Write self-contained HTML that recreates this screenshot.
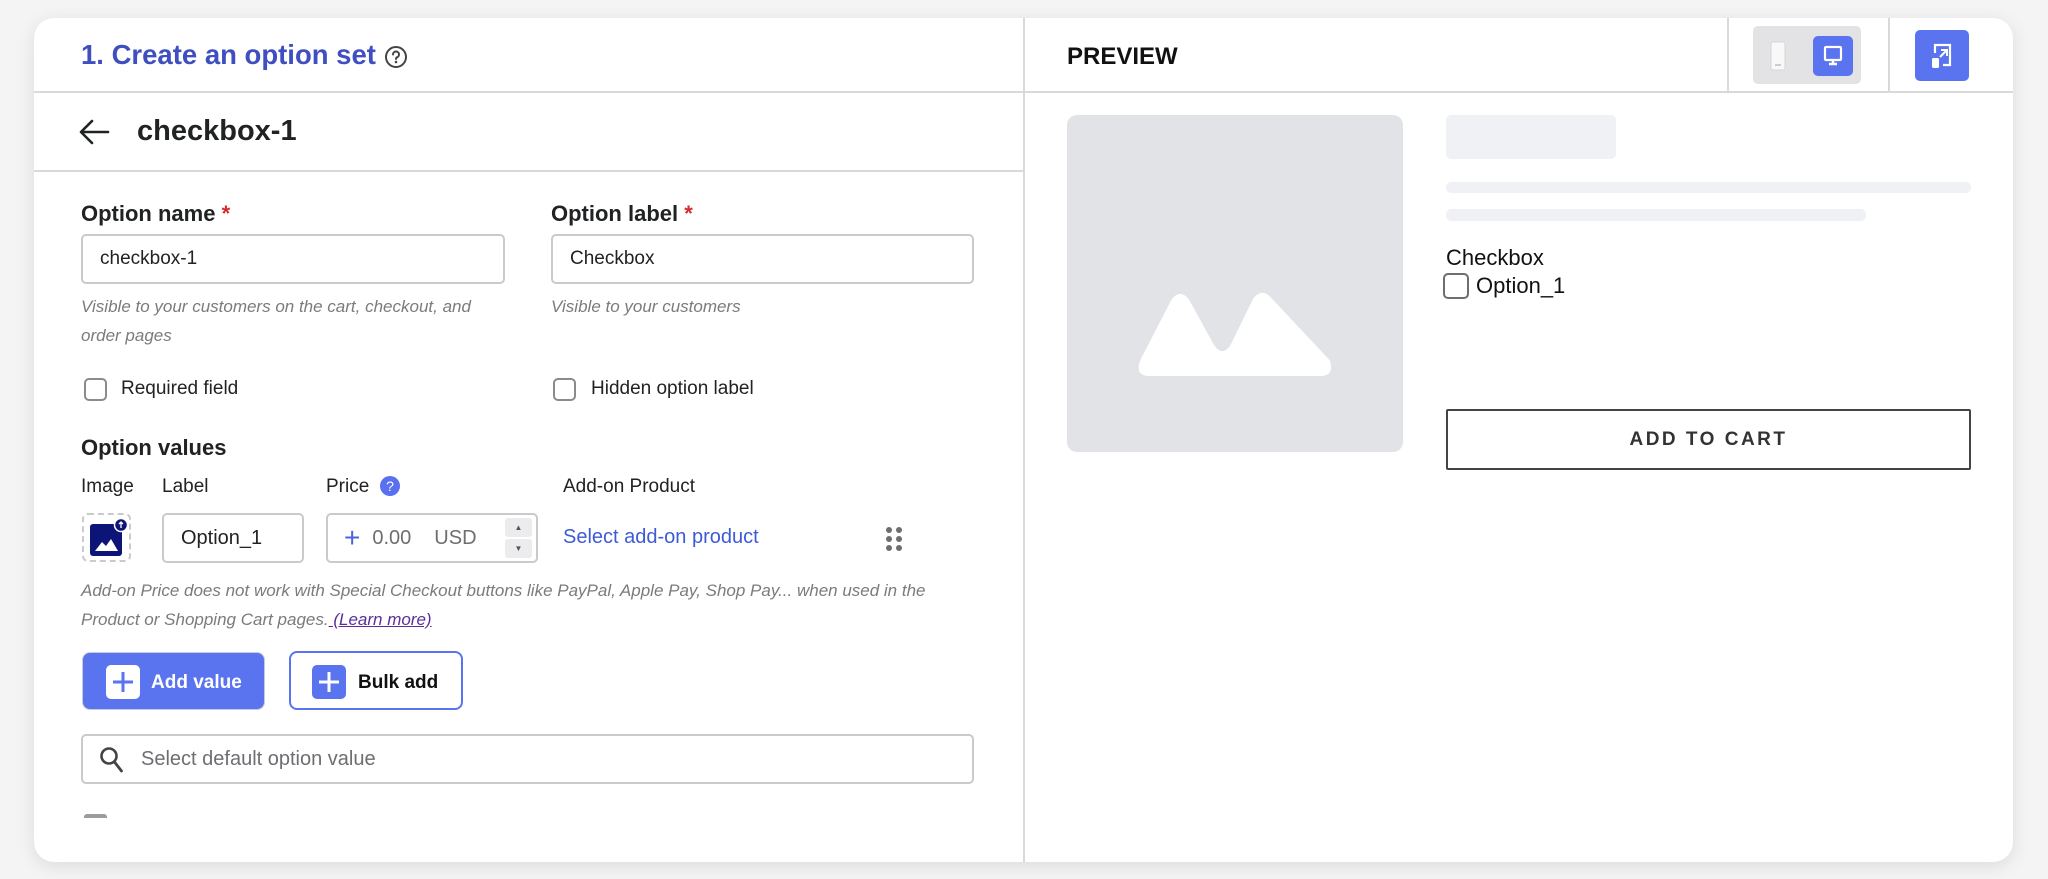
<!DOCTYPE html>
<html><head><meta charset="utf-8"><style>
*{box-sizing:border-box;margin:0;padding:0}
body{width:2048px;height:879px;background:#f4f4f5;font-family:"Liberation Sans",sans-serif;color:#202223;position:relative;overflow:hidden}
.card{position:absolute;left:34px;top:18px;width:1979px;height:844px;background:#fff;border-radius:20px;box-shadow:0 4px 18px rgba(0,0,0,.10);overflow:hidden}
.a{position:absolute}
.hl{position:absolute;height:2px;background:#d9d9dc}
.vl{position:absolute;width:2px;background:#d9d9dc}
.lbl{font-size:22px;font-weight:bold;color:#202223}
.req{color:#d22c2c}
.inp{position:absolute;border:2px solid #c9cacc;border-radius:5px;background:#fff;font-size:19px;color:#202223;padding-left:17px;display:flex;align-items:center}
.help{font-size:17px;font-style:italic;color:#7a7b7e;line-height:29px}
.cb{position:absolute;width:23px;height:23px;border:2px solid #8a8b8e;border-radius:5px;background:#fff}
.txt{font-size:19px;color:#202223}
.skel{position:absolute;background:#f0f1f4;border-radius:5px}
</style></head><body>
<div class="card">
  <div class="a" style="left:47px;top:21px;font-size:27.5px;font-weight:bold;color:#3f4fc0">1. Create an option set</div>
  <svg class="a" style="left:350px;top:27px" width="24" height="24" viewBox="0 0 24 24"><circle cx="12" cy="12" r="10" fill="none" stroke="#444" stroke-width="2"/><path d="M9 9.5a3 3 0 1 1 4 2.8c-.8.4-1 1-1 1.7" fill="none" stroke="#444" stroke-width="2" stroke-linecap="round"/><circle cx="12" cy="17" r="1.3" fill="#444"/></svg>
  <div class="hl" style="left:0;top:73px;width:1979px"></div>
  <div class="vl" style="left:989px;top:0;height:844px"></div>
  <div class="vl" style="left:1693px;top:0;height:73px"></div>
  <div class="vl" style="left:1854px;top:0;height:73px"></div>
  <svg class="a" style="left:44px;top:100px" width="32" height="28" viewBox="0 0 32 28"><path d="M30 14H4M14 3L3 14l11 11" fill="none" stroke="#202223" stroke-width="2.6" stroke-linecap="round" stroke-linejoin="round"/></svg>
  <div class="a" style="left:103px;top:97px;font-size:29px;font-weight:bold">checkbox-1</div>
  <div class="hl" style="left:0;top:152px;width:989px"></div>

  <div class="a lbl" style="left:47px;top:183px">Option name <span class="req">*</span></div>
  <div class="a lbl" style="left:517px;top:183px">Option label <span class="req">*</span></div>
  <div class="inp" style="left:47px;top:216px;width:424px;height:50px">checkbox-1</div>
  <div class="inp" style="left:517px;top:216px;width:423px;height:50px">Checkbox</div>
  <div class="a help" style="left:47px;top:274px;width:410px">Visible to your customers on the cart, checkout, and order pages</div>
  <div class="a help" style="left:517px;top:274px">Visible to your customers</div>
  <div class="cb" style="left:50px;top:360px"></div>
  <div class="a txt" style="left:87px;top:360px">Required field</div>
  <div class="cb" style="left:519px;top:360px"></div>
  <div class="a txt" style="left:557px;top:360px">Hidden option label</div>

  <div class="a lbl" style="left:47px;top:417px">Option values</div>
  <div class="a txt" style="left:47px;top:458px">Image</div>
  <div class="a txt" style="left:128px;top:458px">Label</div>
  <div class="a txt" style="left:292px;top:458px">Price</div>
  <div class="a" style="left:346px;top:458px;width:20px;height:20px;border-radius:50%;background:#5a70ee;color:#fff;font-size:14px;text-align:center;line-height:20px">?</div>
  <div class="a txt" style="left:529px;top:458px">Add-on Product</div>

  <div class="a" style="left:48px;top:495px;width:49px;height:49px;border:2px dashed #c9cacc;border-radius:6px"></div>
  <svg class="a" style="left:54px;top:500px" width="40" height="40" viewBox="0 0 40 40"><rect x="2" y="6" width="32" height="32" rx="3" fill="#0c1478"/><path d="M7 33l7-9 4 4 5-7 7 12z" fill="#fff"/><circle cx="33" cy="7" r="6.5" fill="#0c1478" stroke="#fff" stroke-width="1.5"/><path d="M33 10V4M31 6l2-2 2 2" stroke="#fff" stroke-width="1.3" fill="none"/></svg>
  <div class="inp" style="left:128px;top:495px;width:142px;height:50px;font-size:20px">Option_1</div>
  <div class="inp" style="left:292px;top:495px;width:212px;height:50px;padding-left:16px;color:#6d6e71;font-size:20px">
    <span style="color:#4a63e0;font-size:28px;margin-right:12px;line-height:1">+</span>0.00<span style="margin-left:23px">USD</span>
  </div>
  <div class="a" style="left:471px;top:500px;width:27px;height:19px;background:#ececee;border-radius:3px;font-size:8px;text-align:center;line-height:19px;color:#555">▲</div>
  <div class="a" style="left:471px;top:521px;width:27px;height:19px;background:#ececee;border-radius:3px;font-size:8px;text-align:center;line-height:19px;color:#555">▼</div>
  <div class="a" style="left:529px;top:508px;font-size:20px;color:#3d5bd6">Select add-on product</div>
  <svg class="a" style="left:850px;top:508px" width="20" height="26" viewBox="0 0 20 26"><g fill="#6d6e71"><circle cx="5" cy="4" r="3"/><circle cx="15" cy="4" r="3"/><circle cx="5" cy="13" r="3"/><circle cx="15" cy="13" r="3"/><circle cx="5" cy="22" r="3"/><circle cx="15" cy="22" r="3"/></g></svg>

  <div class="a help" style="left:47px;top:558px;width:900px">Add-on Price does not work with Special Checkout buttons like PayPal, Apple Pay, Shop Pay... when used in the Product or Shopping Cart pages.<span style="color:#5b2d9b;text-decoration:underline"> (Learn more)</span></div>

  <div class="a" style="left:48px;top:634px;width:183px;height:58px;background:#5a73ef;border-radius:8px;border:1px solid #c8ccd8"></div>
  <div class="a" style="left:72px;top:647px;width:34px;height:34px;background:#fff;border-radius:5px"></div>
  <svg class="a" style="left:72px;top:647px" width="34" height="34"><path d="M17 7v20M7 17h20" stroke="#5a73ef" stroke-width="3"/></svg>
  <div class="a" style="left:117px;top:652px;font-size:19px;font-weight:bold;color:#fff;line-height:26px">Add value</div>
  <div class="a" style="left:255px;top:633px;width:174px;height:59px;background:#fff;border-radius:8px;border:2px solid #5a73ef"></div>
  <div class="a" style="left:278px;top:647px;width:34px;height:34px;background:#5a73ef;border-radius:5px"></div>
  <svg class="a" style="left:278px;top:647px" width="34" height="34"><path d="M17 7v20M7 17h20" stroke="#fff" stroke-width="3"/></svg>
  <div class="a" style="left:324px;top:652px;font-size:19px;font-weight:bold;color:#111;line-height:26px">Bulk add</div>

  <div class="inp" style="left:47px;top:716px;width:893px;height:50px;padding-left:58px;color:#6d6e71;font-size:20px">Select default option value</div>
  <svg class="a" style="left:65px;top:728px" width="26" height="28" viewBox="0 0 26 28"><circle cx="10" cy="10" r="7.5" fill="none" stroke="#444" stroke-width="2.6"/><path d="M15.5 16l7 9" stroke="#444" stroke-width="2.8" stroke-linecap="round"/></svg>
  <div class="a" style="left:50px;top:796px;width:23px;height:4px;background:#9a9b9e;border-radius:3px 3px 0 0"></div>

  <div class="a" style="left:1033px;top:25px;font-size:24px;font-weight:bold;color:#111">PREVIEW</div>
  <div class="a" style="left:1719px;top:8px;width:108px;height:58px;background:#e3e3e5;border-radius:5px"></div>
  <svg class="a" style="left:1734px;top:22px" width="20" height="32" viewBox="0 0 20 32"><rect x="3" y="2" width="14" height="28" rx="2" fill="#f8f8f8" stroke="#d6d6d8"/><rect x="7" y="24" width="6" height="2" fill="#ccc"/></svg>
  <div class="a" style="left:1779px;top:18px;width:40px;height:40px;background:#5a73ef;border-radius:5px"></div>
  <svg class="a" style="left:1787px;top:26px" width="24" height="24" viewBox="0 0 24 24"><rect x="4" y="3" width="16" height="13" rx="1" fill="none" stroke="#fff" stroke-width="2.2"/><path d="M12 16v3M8 20h8" stroke="#fff" stroke-width="2.4"/></svg>
  <div class="a" style="left:1881px;top:12px;width:54px;height:51px;background:#5a73ef;border-radius:5px"></div>
  <svg class="a" style="left:1893px;top:22px" width="30" height="32" viewBox="0 0 30 32"><path d="M8 13V5h15v20h-7" fill="none" stroke="#fff" stroke-width="2.2"/><rect x="5" y="18" width="7" height="10" rx="1.5" fill="#fff"/><path d="M13 17l7-7M14 10h6v6" fill="none" stroke="#fff" stroke-width="2"/></svg>

  <div class="a" style="left:1033px;top:97px;width:336px;height:337px;background:#e2e3e7;border-radius:10px"></div>
  <svg class="a" style="left:1100px;top:272px" width="203" height="88" viewBox="0 -2 203 90"><path d="M4 70L36 8Q45 -4 54 8L80 55Q88 66 96 55L120 6Q129 -4 138 6L198 70Q203 86 188 86H14Q-2 86 4 70Z" fill="#fff"/></svg>

  <div class="skel" style="left:1412px;top:97px;width:170px;height:44px"></div>
  <div class="skel" style="left:1412px;top:164px;width:525px;height:11px"></div>
  <div class="skel" style="left:1412px;top:191px;width:420px;height:12px"></div>
  <div class="a" style="left:1412px;top:227px;font-size:22px;color:#111">Checkbox</div>
  <div class="a" style="left:1409px;top:255px;width:26px;height:26px;border:2px solid #6d6e71;border-radius:5px"></div>
  <div class="a" style="left:1442px;top:255px;font-size:22px;color:#111">Option_1</div>
  <div class="a" style="left:1412px;top:391px;width:525px;height:61px;border:2px solid #444;border-radius:2px;text-align:center;line-height:57px;font-size:19px;font-weight:bold;letter-spacing:2.5px;color:#333">ADD TO CART</div>
</div>
</body></html>
